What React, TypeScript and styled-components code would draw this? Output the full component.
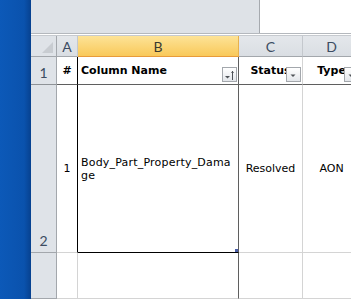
import React from 'react'
import styled, { createGlobalStyle } from 'styled-components'

const GlobalStyle = createGlobalStyle`
    html, body {
        margin: 0;
        padding: 0;
        background: #ffffff;
    }
    body {
        width: 351px;
        height: 299px;
        overflow: hidden;
    }
`

const Screen = styled.div`
    display: flex;
    width: 351px;
    height: 299px;
    overflow: hidden;
`

const Desktop = styled.div`
    flex: none;
    width: 31px;
    background: linear-gradient(to right, #0c59b8 0%, #0a52ad 78%, #07418f 100%);
`

const Window = styled.div`
    flex: 1;
    min-width: 0;
    display: flex;
    flex-direction: column;
`

const TopBar = styled.div`
    display: flex;
    height: 33px;
    flex: none;
    border-bottom: 1px solid #b4b8bd;
`

const NameArea = styled.div`
    width: 228px;
    background: #dee2e7;
    border-right: 1px solid #a6aaaf;
`

const FormulaArea = styled.div`
    flex: 1;
    background: #ffffff;
`

const Splitter = styled.div`
    height: 1px;
    flex: none;
    background: #ffffff;
    border-bottom: 1px solid #c6cacf;
`

const Sheet = styled.div`
    flex: 1;
    display: grid;
    grid-template-columns: 26px 21px 161px 64px 58px;
    grid-template-rows: 21px 28px 168px 1fr;
    font-family: 'DejaVu Sans', Verdana, sans-serif;
    font-size: 11px;
    color: #000000;
`

const Corner = styled.div`
    position: relative;
    background: #dfe3e8;
    border-right: 1px solid #a3a7ac;
    border-bottom: 1px solid #a3a7ac;
`

const CornerTriangle = styled.div`
    position: absolute;
    right: 3px;
    bottom: 3px;
    width: 0;
    height: 0;
    border-left: 11px solid transparent;
    border-bottom: 11px solid #c8ccd1;
`

const ColHead = styled.div<{ $selected?: boolean }>`
    display: flex;
    align-items: center;
    justify-content: center;
    box-sizing: border-box;
    font-family: Lato, 'Open Sans', sans-serif;
    font-size: 14px;
    color: ${(p) => (p.$selected ? '#3a3a30' : '#3c4c62')};
    background: ${(p) =>
        p.$selected
            ? 'linear-gradient(#fde397, #f9c95a)'
            : 'linear-gradient(#e4e7eb, #dadee3)'};
    border-right: 1px solid ${(p) => (p.$selected ? '#e7b14d' : '#c4c8cd')};
    border-bottom: 1px solid ${(p) => (p.$selected ? '#e89b3a' : '#a3a7ac')};
`

const RowHead = styled.div<{ $dark?: boolean }>`
    display: flex;
    align-items: flex-end;
    justify-content: center;
    padding-bottom: 3px;
    box-sizing: border-box;
    font-family: Lato, 'Open Sans', sans-serif;
    font-size: 14px;
    color: #3c4c62;
    background: #dfe3e8;
    border-right: 1px solid #a3a7ac;
    border-bottom: 1px solid ${(p) => (p.$dark ? '#8e9296' : '#a3a7ac')};
`

const Cell = styled.div<{
    $right?: string
    $bottom?: string
    $align?: 'left' | 'center'
    $bold?: boolean
}>`
    position: relative;
    display: flex;
    align-items: center;
    justify-content: ${(p) => (p.$align === 'left' ? 'flex-start' : 'center')};
    box-sizing: border-box;
    min-width: 0;
    overflow: hidden;
    padding: 0 3px;
    font-weight: ${(p) => (p.$bold ? 700 : 400)};
    white-space: nowrap;
    border-right: 1px solid ${(p) => p.$right || '#d4d4d4'};
    border-bottom: 1px solid ${(p) => p.$bottom || '#d4d4d4'};
`

const Wrapped = styled.span`
    white-space: normal;
    word-break: break-all;
    letter-spacing: 0.2px;
    line-height: 13px;
`

const FilterButton = styled.div`
    position: absolute;
    right: 1px;
    bottom: 2px;
    width: 15px;
    height: 15px;
    box-sizing: border-box;
    border: 1px solid #a3a7ac;
    background: linear-gradient(#ffffff, #e3e6ea);
    display: flex;
    align-items: center;
    justify-content: center;
`

const FillHandle = styled.div`
    position: absolute;
    right: -1px;
    bottom: -1px;
    width: 4px;
    height: 4px;
    background: #4a5ea8;
`

const DropIcon = () => (
    <svg width="13" height="13" viewBox="0 0 13 13">
        <path d="M3.5 6.5h5l-2.5 2.5z" fill="#4e5257" />
    </svg>
)

const SortDropIcon = () => (
    <svg width="13" height="13" viewBox="0 0 13 13">
        <path d="M2 8h5l-2.5 2.5z" fill="#4e5257" />
        <path d="M9.5 3v9" stroke="#4e5257" strokeWidth="1" />
        <path d="M8 5l1.5-2 1.5 2z" fill="#4e5257" />
    </svg>
)

const FROZEN = '#5f5f5f'
const SELECT = '#000000'

export default function App(): JSX.Element {
    return (
        <>
            <GlobalStyle />
            <Screen>
                <Desktop />
                <Window>
                    <TopBar>
                        <NameArea />
                        <FormulaArea />
                    </TopBar>
                    <Splitter />
                    <Sheet>
                        <Corner>
                            <CornerTriangle />
                        </Corner>
                        <ColHead>A</ColHead>
                        <ColHead $selected>B</ColHead>
                        <ColHead>C</ColHead>
                        <ColHead>D</ColHead>

                        <RowHead $dark>1</RowHead>
                        <Cell $bold $right={SELECT} $bottom={FROZEN}>
                            #
                        </Cell>
                        <Cell $bold $align="left" $right={FROZEN} $bottom={FROZEN}>
                            Column Name
                            <FilterButton>
                                <SortDropIcon />
                            </FilterButton>
                        </Cell>
                        <Cell $bold $bottom={FROZEN}>
                            Status
                            <FilterButton>
                                <DropIcon />
                            </FilterButton>
                        </Cell>
                        <Cell $bold $bottom={FROZEN}>
                            Type
                            <FilterButton>
                                <DropIcon />
                            </FilterButton>
                        </Cell>

                        <RowHead>2</RowHead>
                        <Cell $right={SELECT}>1</Cell>
                        <Cell $align="left" $right={FROZEN} $bottom={SELECT}>
                            <Wrapped>Body_Part_Property_Damage</Wrapped>
                            <FillHandle />
                        </Cell>
                        <Cell>Resolved</Cell>
                        <Cell>AON</Cell>

                        <RowHead />
                        <Cell />
                        <Cell $right={FROZEN} />
                        <Cell />
                        <Cell />
                    </Sheet>
                </Window>
            </Screen>
        </>
    )
}
